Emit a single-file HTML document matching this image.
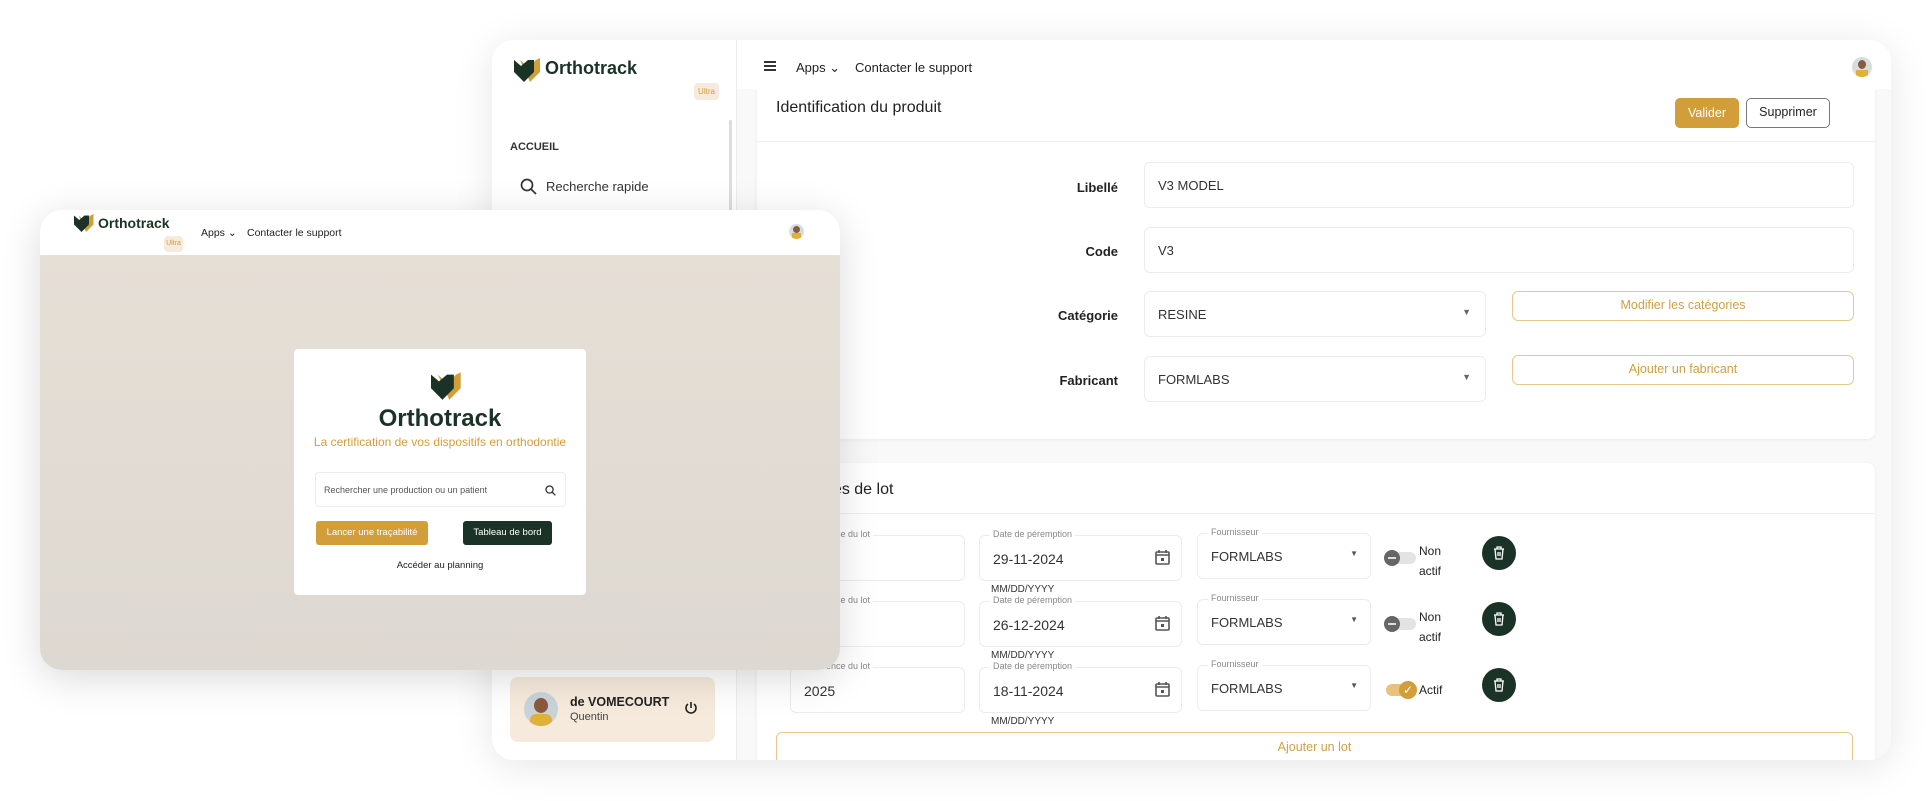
<!DOCTYPE html>
<html><head><meta charset="utf-8"><style>
*{box-sizing:border-box;margin:0;padding:0}
body{width:1932px;height:801px;background:#fff;position:relative;overflow:hidden;font-family:"Liberation Sans",sans-serif;color:#222}
.a{position:absolute}
.win{position:absolute;background:#fff;border-radius:22px;overflow:hidden}
.inp{position:absolute;border:1px solid #ececec;border-radius:6px;background:#fff;font-size:13px;color:#333}
.lbl{position:absolute;font-size:13px;font-weight:bold;color:#222;text-align:right;width:200px}
.obtn{position:absolute;border:1.5px solid #e6c88f;border-radius:6px;color:#cf9f45;font-size:12.5px;text-align:center}
.fl{position:absolute;top:-7px;left:10px;background:#fff;padding:0 3px;font-size:9px;color:#888}
.del{position:absolute;width:34px;height:34px;border-radius:50%;background:#1b3327}
.tg{position:absolute;width:30px;height:12px;border-radius:6px;background:#e3e3e3}
</style></head><body>

<div class="win" style="left:492px;top:40px;width:1399px;height:720px;box-shadow:0 6px 40px rgba(0,0,0,.10)">
  <div class="a" style="left:245px;top:0;width:1154px;height:720px;background:#f9f9f9"></div>
  <div class="a" style="left:0;top:0;width:245px;height:720px;background:#fff;border-right:1px solid #ececec"></div>
  <svg class="a" style="left:22px;top:18px" width="28" height="24" viewBox="0 0 28 24"><path d="M6 2 L14 9 L22 2 L26 0 L26 14 L16 24 Z" fill="#d19e3a"/><path d="M0 2 L7 8 L14 2 L20 2 L20 14 L10 24 L0 14 Z" fill="#1b3327"/></svg>
  <div class="a" style="left:53px;top:18px;font-size:18px;font-weight:bold;color:#1b3327">Orthotrack</div>
  <div class="a" style="left:202px;top:43px;width:25px;height:17px;border-radius:4px;background:#f6eadc;font-size:8px;color:#d19e3a;text-align:center;line-height:17px">Ultra</div>
  <div class="a" style="left:237px;top:80px;width:3px;height:360px;background:#ddd;border-radius:2px"></div>
  <div class="a" style="left:18px;top:101px;font-size:11px;font-weight:bold;color:#333">ACCUEIL</div>
  <svg class="a" style="left:28px;top:138px" width="17" height="17" viewBox="0 0 17 17"><circle cx="7" cy="7" r="5.5" fill="none" stroke="#333" stroke-width="1.7"/><path d="M11 11 L16 16" stroke="#333" stroke-width="1.7"/></svg>
  <div class="a" style="left:54px;top:139px;font-size:13px;color:#333">Recherche rapide</div>
  <div class="a" style="left:18px;top:637px;width:205px;height:65px;border-radius:8px;background:#f6eadc"></div>
  <div class="a" style="left:32px;top:652px;width:34px;height:34px;border-radius:50%;background:#c9d3da;overflow:hidden"><div class="a" style="left:10px;top:6px;width:14px;height:15px;border-radius:50%;background:#8a5a3c"></div><div class="a" style="left:6px;top:22px;width:22px;height:14px;border-radius:6px;background:#e0b03a"></div></div>
  <div class="a" style="left:78px;top:655px;font-size:12.5px;font-weight:bold;color:#222">de VOMECOURT</div>
  <div class="a" style="left:78px;top:671px;font-size:11px;color:#444">Quentin</div>
  <svg class="a" style="left:192px;top:661px" width="14" height="14" viewBox="0 0 14 14"><path d="M4 3 A5 5 0 1 0 10 3" fill="none" stroke="#222" stroke-width="1.6"/><path d="M7 1 V7" stroke="#222" stroke-width="1.6"/></svg>
  <div class="a" style="left:265px;top:40px;width:1118px;height:359px;background:#fff;border-radius:8px;box-shadow:0 1px 4px rgba(0,0,0,.06)"></div>
  <div class="a" style="left:245px;top:0;width:1154px;height:49px;background:#fff"></div>
  <div class="a" style="left:1360px;top:17px;width:20px;height:20px;border-radius:50%;background:#d6dde2;overflow:hidden"><div class="a" style="left:6px;top:3px;width:8px;height:9px;border-radius:50%;background:#8a5a3c"></div><div class="a" style="left:4px;top:13px;width:12px;height:8px;background:#e0b03a"></div></div>
  <div class="a" style="left:272px;top:21px;width:12px;height:2px;background:#333;box-shadow:0 4px 0 #333,0 8px 0 #333"></div>
  <div class="a" style="left:304px;top:20px;font-size:13px;color:#222">Apps &#8964;</div>
  <div class="a" style="left:363px;top:20px;font-size:13px;color:#222">Contacter le support</div>
  <div class="a" style="left:284px;top:59px;font-size:16px;color:#222">Identification du produit</div>
  <div class="a" style="left:1183px;top:58px;width:64px;height:30px;border-radius:5px;background:#d19e3a;color:#fff;font-size:12.5px;text-align:center;line-height:30px">Valider</div>
  <div class="a" style="left:1254px;top:58px;width:84px;height:30px;border-radius:5px;border:1.5px solid #777;color:#222;font-size:12.5px;text-align:center;line-height:27px">Supprimer</div>
  <div class="a" style="left:265px;top:101px;width:1118px;height:1px;background:#eee"></div>
  <div class="lbl" style="left:426px;top:140px">Libellé</div>
  <div class="inp" style="left:652px;top:122px;width:710px;height:46px;padding:15px 13px">V3 MODEL</div>
  <div class="lbl" style="left:426px;top:204px">Code</div>
  <div class="inp" style="left:652px;top:187px;width:710px;height:46px;padding:15px 13px">V3</div>
  <div class="lbl" style="left:426px;top:268px">Catégorie</div>
  <div class="inp" style="left:652px;top:251px;width:342px;height:46px;padding:15px 13px">RESINE<span style="position:absolute;right:14px;top:15px;font-size:9px;color:#666">&#9660;</span></div>
  <div class="obtn" style="left:1020px;top:251px;width:342px;height:30px;line-height:27px">Modifier les catégories</div>
  <div class="lbl" style="left:426px;top:333px">Fabricant</div>
  <div class="inp" style="left:652px;top:316px;width:342px;height:46px;padding:15px 13px">FORMLABS<span style="position:absolute;right:14px;top:15px;font-size:9px;color:#666">&#9660;</span></div>
  <div class="obtn" style="left:1020px;top:315px;width:342px;height:30px;line-height:27px">Ajouter un fabricant</div>
  <div class="a" style="left:265px;top:423px;width:1118px;height:320px;background:#fff;border-radius:8px;box-shadow:0 1px 4px rgba(0,0,0,.06)"></div>
  <div class="a" style="left:276px;top:441px;font-size:16px;color:#222">Références de lot</div>
  <div class="a" style="left:265px;top:473px;width:1118px;height:1px;background:#eee"></div>
</div>

<div class="inp" style="left:790px;top:535px;width:175px;height:46px"><span class="fl">Référence du lot</span></div>
<div class="inp" style="left:979px;top:535px;width:203px;height:46px;padding:15px 13px;font-size:14px"><span class="fl">Date de péremption</span>29-11-2024</div>
<div class="a" style="left:991px;top:584px;font-size:10px;color:#333">MM/DD/YYYY</div>
<div class="inp" style="left:1197px;top:533px;width:174px;height:46px;padding:15px 13px"><span class="fl">Fournisseur</span>FORMLABS<span style="position:absolute;right:12px;top:15px;font-size:8px;color:#555">&#9660;</span></div>
<div class="inp" style="left:790px;top:601px;width:175px;height:46px"><span class="fl">Référence du lot</span></div>
<div class="inp" style="left:979px;top:601px;width:203px;height:46px;padding:15px 13px;font-size:14px"><span class="fl">Date de péremption</span>26-12-2024</div>
<div class="a" style="left:991px;top:650px;font-size:10px;color:#333">MM/DD/YYYY</div>
<div class="inp" style="left:1197px;top:599px;width:174px;height:46px;padding:15px 13px"><span class="fl">Fournisseur</span>FORMLABS<span style="position:absolute;right:12px;top:15px;font-size:8px;color:#555">&#9660;</span></div>
<div class="inp" style="left:790px;top:667px;width:175px;height:46px;padding:15px 13px;font-size:14px"><span class="fl">Référence du lot</span>2025</div>
<div class="inp" style="left:979px;top:667px;width:203px;height:46px;padding:15px 13px;font-size:14px"><span class="fl">Date de péremption</span>18-11-2024</div>
<div class="a" style="left:991px;top:716px;font-size:10px;color:#333">MM/DD/YYYY</div>
<div class="inp" style="left:1197px;top:665px;width:174px;height:46px;padding:15px 13px"><span class="fl">Fournisseur</span>FORMLABS<span style="position:absolute;right:12px;top:15px;font-size:8px;color:#555">&#9660;</span></div>
<svg class="a" style="left:1155px;top:549px" width="15" height="16" viewBox="0 0 15 16"><rect x="1" y="3" width="13" height="12" rx="1" fill="none" stroke="#555" stroke-width="1.6"/><path d="M1 6h13M4 1v3M11 1v3" stroke="#555" stroke-width="1.6"/><rect x="6" y="9" width="3" height="3" fill="#555"/></svg>
<svg class="a" style="left:1155px;top:615px" width="15" height="16" viewBox="0 0 15 16"><rect x="1" y="3" width="13" height="12" rx="1" fill="none" stroke="#555" stroke-width="1.6"/><path d="M1 6h13M4 1v3M11 1v3" stroke="#555" stroke-width="1.6"/><rect x="6" y="9" width="3" height="3" fill="#555"/></svg>
<svg class="a" style="left:1155px;top:681px" width="15" height="16" viewBox="0 0 15 16"><rect x="1" y="3" width="13" height="12" rx="1" fill="none" stroke="#555" stroke-width="1.6"/><path d="M1 6h13M4 1v3M11 1v3" stroke="#555" stroke-width="1.6"/><rect x="6" y="9" width="3" height="3" fill="#555"/></svg>
<div class="tg" style="left:1386px;top:552px"></div><div class="a" style="left:1384px;top:550px;width:16px;height:16px;border-radius:50%;background:#666"><div class="a" style="left:4px;top:7px;width:8px;height:2px;background:#ddd"></div></div>
<div class="a" style="left:1419px;top:541px;font-size:12px;line-height:20px;color:#222">Non<br>actif</div>
<div class="tg" style="left:1386px;top:618px"></div><div class="a" style="left:1384px;top:616px;width:16px;height:16px;border-radius:50%;background:#666"><div class="a" style="left:4px;top:7px;width:8px;height:2px;background:#ddd"></div></div>
<div class="a" style="left:1419px;top:607px;font-size:12px;line-height:20px;color:#222">Non<br>actif</div>
<div class="tg" style="left:1386px;top:684px;background:#e8c27a"></div><div class="a" style="left:1399px;top:681px;width:18px;height:18px;border-radius:50%;background:#d19e3a;color:#fff;font-size:12px;text-align:center;line-height:18px">&#10003;</div>
<div class="a" style="left:1419px;top:683px;font-size:12px;color:#222">Actif</div>
<div class="del" style="left:1482px;top:536px"></div>
<div class="del" style="left:1482px;top:602px"></div>
<div class="del" style="left:1482px;top:668px"></div>
<svg class="a" style="left:1492px;top:546px" width="14" height="14" viewBox="0 0 14 14"><path d="M2 3h10M5 3V1h4v2M3 3l1 10h6l1-10M6 6v4M8 6v4" fill="none" stroke="#fff" stroke-width="1.3"/></svg>
<svg class="a" style="left:1492px;top:612px" width="14" height="14" viewBox="0 0 14 14"><path d="M2 3h10M5 3V1h4v2M3 3l1 10h6l1-10M6 6v4M8 6v4" fill="none" stroke="#fff" stroke-width="1.3"/></svg>
<svg class="a" style="left:1492px;top:678px" width="14" height="14" viewBox="0 0 14 14"><path d="M2 3h10M5 3V1h4v2M3 3l1 10h6l1-10M6 6v4M8 6v4" fill="none" stroke="#fff" stroke-width="1.3"/></svg>
<div class="a" style="left:776px;top:732px;width:1077px;height:28px;overflow:hidden"><div class="obtn" style="left:0;top:0;width:1077px;height:34px;line-height:28px">Ajouter un lot</div></div>

<div class="win" style="left:40px;top:210px;width:800px;height:460px;box-shadow:0 8px 40px rgba(0,0,0,.15)">
  <div class="a" style="left:0;top:45px;width:800px;height:415px;background:linear-gradient(#e6dfd6,#ddd8d1)"></div>
  <svg class="a" style="left:34px;top:4px" width="21" height="18" viewBox="0 0 28 24"><path d="M6 2 L14 9 L22 2 L26 0 L26 14 L16 24 Z" fill="#d19e3a"/><path d="M0 2 L7 8 L14 2 L20 2 L20 14 L10 24 L0 14 Z" fill="#1b3327"/></svg>
  <div class="a" style="left:58px;top:5px;font-size:14px;font-weight:bold;color:#1b3327">Orthotrack</div>
  <div class="a" style="left:124px;top:26px;width:19px;height:16px;border-radius:4px;background:#f6eadc;font-size:7px;color:#d19e3a;text-align:center;line-height:16px">Ultra</div>
  <div class="a" style="left:161px;top:17px;font-size:10.5px;color:#222">Apps &#8964;</div>
  <div class="a" style="left:207px;top:17px;font-size:10.5px;color:#222">Contacter le support</div>
  <div class="a" style="left:749px;top:14px;width:15px;height:15px;border-radius:50%;background:#d6dde2;overflow:hidden"><div class="a" style="left:4px;top:2px;width:7px;height:7px;border-radius:50%;background:#8a5a3c"></div><div class="a" style="left:3px;top:9px;width:9px;height:6px;background:#e0b03a"></div></div>
  <div class="a" style="left:254px;top:139px;width:292px;height:246px;background:#fff;border-radius:4px"></div>
  <svg class="a" style="left:391px;top:162px" width="32" height="28" viewBox="0 0 28 24"><path d="M6 2 L14 9 L22 2 L26 0 L26 14 L16 24 Z" fill="#d19e3a"/><path d="M0 2 L7 8 L14 2 L20 2 L20 14 L10 24 L0 14 Z" fill="#1b3327"/></svg>
  <div class="a" style="left:254px;top:195px;width:292px;text-align:center;font-size:24px;font-weight:bold;color:#1b3327">Orthotrack</div>
  <div class="a" style="left:254px;top:225px;width:292px;text-align:center;font-size:12px;color:#d19e3a">La certification de vos dispositifs en orthodontie</div>
  <div class="a" style="left:275px;top:262px;width:251px;height:35px;border:1px solid #ececec;border-radius:4px;font-size:9px;color:#555;padding:12px 8px">Rechercher une production ou un patient</div>
  <svg class="a" style="left:505px;top:275px" width="11" height="11" viewBox="0 0 17 17"><circle cx="7" cy="7" r="5.5" fill="none" stroke="#333" stroke-width="2"/><path d="M11 11 L16 16" stroke="#333" stroke-width="2"/></svg>
  <div class="a" style="left:276px;top:311px;width:112px;height:24px;background:#d19e3a;border-radius:3px;color:#fff;font-size:9.5px;text-align:center;line-height:24px">Lancer une traçabilité</div>
  <div class="a" style="left:423px;top:311px;width:89px;height:24px;background:#1b3327;border-radius:3px;color:#fff;font-size:9.5px;text-align:center;line-height:24px">Tableau de bord</div>
  <div class="a" style="left:254px;top:350px;width:292px;text-align:center;font-size:9.5px;color:#222">Accéder au planning</div>
</div>
</body></html>
